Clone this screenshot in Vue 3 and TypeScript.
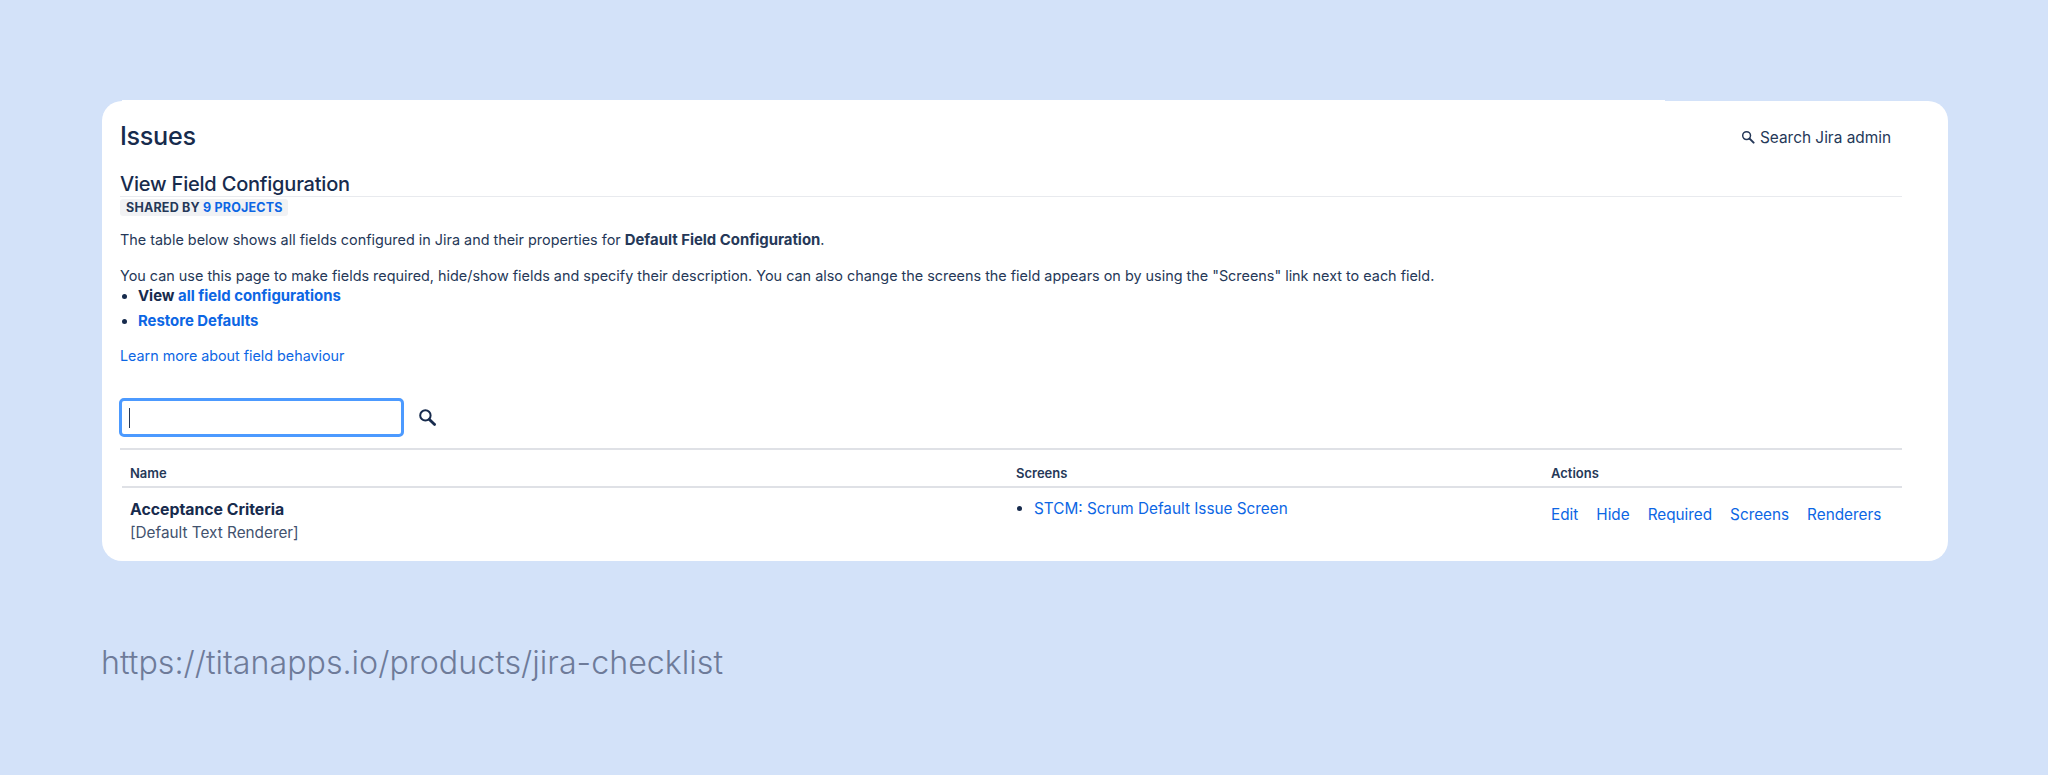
<script setup lang="ts">
const actions: string[] = ['Edit', 'Hide', 'Required', 'Screens', 'Renderers']
</script>

<template>
  <div class="page">
    <main class="card">
      <header class="top">
        <h1>Issues</h1>
        <div class="admin">
          <svg width="14" height="14" viewBox="0 0 14 14" fill="none">
            <circle cx="5.6" cy="5.6" r="3.9" stroke="#253858" stroke-width="1.5" />
            <path d="M8.6 8.6 12.6 12.6" stroke="#253858" stroke-width="2" stroke-linecap="round" />
          </svg>
          <span>Search Jira admin</span>
        </div>
      </header>
      <h2>View Field Configuration</h2>
      <div class="badge-row">
        <span class="badge">SHARED BY <a>9 PROJECTS</a></span>
      </div>
      <p class="intro">The table below shows all fields configured in Jira and their properties for <b>Default Field Configuration</b>.</p>
      <p class="use">You can use this page to make fields required, hide/show fields and specify their description. You can also change the screens the field appears on by using the "Screens" link next to each field.</p>
      <ul class="links">
        <li><b>View <a>all field configurations</a></b></li>
        <li><b><a>Restore Defaults</a></b></li>
      </ul>
      <a class="learn">Learn more about field behaviour</a>
      <div class="filter">
        <div class="input"><i class="caret"></i></div>
        <svg width="19" height="19" viewBox="0 0 19 19" fill="none">
          <circle cx="7.4" cy="7.4" r="5.2" stroke="#172b4d" stroke-width="2" />
          <path d="M11.4 11.4 16.6 16.6" stroke="#172b4d" stroke-width="2.8" stroke-linecap="round" />
        </svg>
      </div>
      <section class="table">
        <div class="row head">
          <div>Name</div>
          <div>Screens</div>
          <div>Actions</div>
        </div>
        <div class="row body">
          <div>
            <div class="field">Acceptance Criteria</div>
            <div class="renderer">[Default Text Renderer]</div>
          </div>
          <ul class="screens"><li><a>STCM: Scrum Default Issue Screen</a></li></ul>
          <div class="actions"><a v-for="a in actions" :key="a">{{ a }}</a></div>
        </div>
      </section>
    </main>
    <footer class="url">https://titanapps.io/products/jira-checklist</footer>
  </div>
</template>

<style scoped>
.page {
  width: 2048px;
  height: 775px;
  box-sizing: border-box;
  padding: 101px 100px 0 102px;
  background: #d3e2f9;
  font-family: Inter, "Liberation Sans", sans-serif;
  color: #172b4d;
  overflow: hidden;
}
a { color: #0c66e4; }
.card {
  position: relative;
  height: 460px;
  box-sizing: border-box;
  padding: 18px 46px 0 18px;
  background: #fff;
  border-radius: 20px;
}
.card::before {
  content: "";
  position: absolute;
  top: -1px;
  left: 20px;
  width: 1543px;
  height: 1px;
  background: #fff;
}
.top {
  height: 36px;
  display: flex;
  justify-content: space-between;
  align-items: center;
}
h1 {
  margin: -1px 0 1px;
  font-size: 25.2px;
  line-height: 36px;
  font-weight: 500;
  letter-spacing: -0.3px;
}
.admin {
  display: flex;
  align-items: center;
  gap: 5px;
  margin-right: 11px;
  font-size: 15.4px;
  color: #253858;
}
.admin svg { margin-left: 1px; }
h2 {
  margin: 12px 0 0;
  padding-top: 6px;
  height: 23px;
  border-bottom: 1px solid #e8eaee;
  font-size: 20px;
  line-height: 23px;
  font-weight: 500;
  letter-spacing: -0.2px;
}
.badge-row { display: flex; margin-top: 2px; }
.badge {
  padding: 0 5px 0 6px;
  height: 17px;
  line-height: 17px;
  border-radius: 3px;
  background: #f1f2f4;
  font-size: 12.5px;
  font-weight: 700;
  color: #253858;
  letter-spacing: 0.2px;
}
.intro, .use {
  margin: 0;
  font-size: 14.4px;
  line-height: 20px;
  color: #253858;
}
.intro b { font-size: 14.9px; }
.intro { margin-top: 14px; }
.use { margin-top: 16px; }
.links {
  margin: 0;
  padding: 0 0 0 18px;
  font-size: 14.9px;
  line-height: 20px;
}
.links li { height: 25px; }
.learn {
  display: block;
  margin-top: 10px;
  font-size: 14.3px;
  line-height: 20px;
}
.filter {
  display: flex;
  align-items: center;
  gap: 14px;
  margin-top: 32px;
  margin-left: -1px;
}
.input {
  width: 285px;
  height: 39px;
  box-sizing: border-box;
  display: flex;
  align-items: center;
  padding-left: 7px;
  border: 3px solid #4c9aff;
  border-radius: 5px;
}
.caret {
  width: 1px;
  height: 20px;
  background: #253858;
}
.table {
  margin-top: 11px;
  border-top: 2px solid #dfe1e6;
}
.row {
  display: grid;
  grid-template-columns: 886px 535px 1fr;
  margin-left: 2px;
}
.head {
  height: 38px;
  box-sizing: border-box;
  padding: 13px 0 0 8px;
  border-bottom: 2px solid #dfe1e6;
  font-size: 13px;
  line-height: 20px;
  font-weight: 600;
  color: #253858;
}
.body { padding: 11px 0 0 8px; }
.field {
  font-size: 15.8px;
  line-height: 22px;
  font-weight: 700;
}
.renderer {
  font-size: 15.3px;
  line-height: 23px;
  color: #42526e;
}
.screens {
  margin: 0;
  padding: 0 0 0 18px;
  font-size: 15.3px;
  line-height: 20px;
}
.actions {
  display: flex;
  gap: 18px;
  padding-top: 6px;
  font-size: 15.3px;
  line-height: 20px;
}
.url {
  margin-top: 80px;
  margin-left: -1px;
  font-size: 32.2px;
  line-height: 44px;
  font-weight: 300;
  color: #6e7b99;
}
</style>
